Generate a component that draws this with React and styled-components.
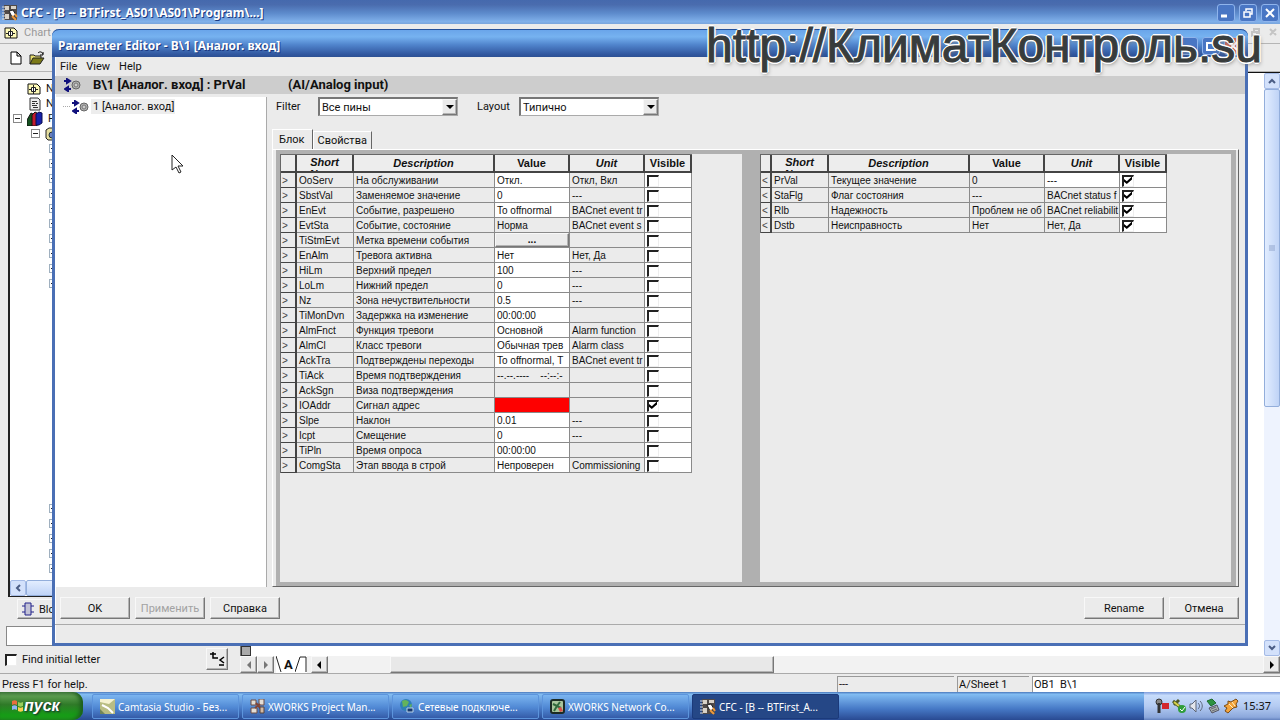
import React from 'react';
import styled, { createGlobalStyle, css } from 'styled-components';

const inputPins = [
  { name: 'OoServ', text: 'На обслуживании', value: 'Откл.', unit: 'Откл, Вкл' },
  { name: 'SbstVal', text: 'Заменяемое значение', value: '0', unit: '---' },
  { name: 'EnEvt', text: 'Событие, разрешено', value: 'To offnormal', unit: 'BACnet event tr' },
  { name: 'EvtSta', text: 'Событие, состояние', value: 'Норма', unit: 'BACnet event s', kind: 'locked' },
  { name: 'TiStmEvt', text: 'Метка времени события', value: '...', unit: '', kind: 'button' },
  { name: 'EnAlm', text: 'Тревога активна', value: 'Нет', unit: 'Нет, Да' },
  { name: 'HiLm', text: 'Верхний предел', value: '100', unit: '---' },
  { name: 'LoLm', text: 'Нижний предел', value: '0', unit: '---' },
  { name: 'Nz', text: 'Зона нечуствительности', value: '0.5', unit: '---' },
  { name: 'TiMonDvn', text: 'Задержка на изменение', value: '00:00:00', unit: '' },
  { name: 'AlmFnct', text: 'Функция тревоги', value: 'Основной', unit: 'Alarm function' },
  { name: 'AlmCl', text: 'Класс тревоги', value: 'Обычная трев', unit: 'Alarm class' },
  { name: 'AckTra', text: 'Подтверждены переходы', value: 'To offnormal, T', unit: 'BACnet event tr' },
  { name: 'TiAck', text: 'Время подтверждения', value: '--.--.----    --:--:-', unit: '', kind: 'locked' },
  { name: 'AckSgn', text: 'Виза подтверждения', value: '', unit: '', kind: 'locked' },
  { name: 'IOAddr', text: 'Сигнал адрес', value: '', unit: '', kind: 'error', visible: true },
  { name: 'Slpe', text: 'Наклон', value: '0.01', unit: '---' },
  { name: 'Icpt', text: 'Смещение', value: '0', unit: '---' },
  { name: 'TiPln', text: 'Время опроса', value: '00:00:00', unit: '' },
  { name: 'ComgSta', text: 'Этап ввода в строй', value: 'Непроверен', unit: 'Commissioning' },
];

const outputPins = [
  { name: 'PrVal', text: 'Текущее значение', value: '0', unit: '---', kind: 'locked', visible: true, openUnit: true },
  { name: 'StaFlg', text: 'Флаг состояния', value: '---', unit: 'BACnet status f', kind: 'locked', visible: true },
  { name: 'Rlb', text: 'Надежность', value: 'Проблем не об', unit: 'BACnet reliabilit', kind: 'locked', visible: true },
  { name: 'Dstb', text: 'Неисправность', value: 'Нет', unit: 'Нет, Да', kind: 'locked', visible: true },
];

const tasks = [
  { title: 'Camtasia Studio - Без...', icon: 'camtasia' },
  { title: 'XWORKS Project Man...', icon: 'project' },
  { title: 'Сетевые подключе...', icon: 'globe' },
  { title: 'XWORKS Network Co...', icon: 'network' },
  { title: 'CFC - [B -- BTFirst_A...', icon: 'cfc', active: true },
];

// true = the row has an expander, false = it only continues the branch
const branchRows = [...Array(10).fill(true), ...Array(14).fill(false), ...Array(5).fill(true)];

const PinIcon = () => (
  <svg width="17" height="14" viewBox="0 0 17 14" aria-hidden="true">
    <path d="M0 3h3M3 1l3 2-3 2zM7 11H4M4 9l-3 2 3 2z" fill="#10107c" stroke="#10107c" strokeWidth="2" />
    <circle cx="12" cy="7" r="4" fill="#b4b4b4" stroke="#666" />
    <circle cx="12" cy="7" r="2" fill="#ccc" stroke="#777" />
  </svg>
);

const ChartIcon = () => (
  <svg width="14" height="12" viewBox="0 0 14 12" aria-hidden="true">
    <path d="M1 1h9l3 3v7H1z" fill="#fffbb8" stroke="#111" />
    <path d="M2 6.500h2m5 0h2M4.500 4.500h4v4h-4zM6.500 2v9" fill="#fff" stroke="#222" />
  </svg>
);

const TextIcon = () => (
  <svg width="12" height="14" viewBox="0 0 12 14" aria-hidden="true">
    <path d="M1 1h8l2 2v10H1z" fill="#eee" stroke="#333" />
    <path d="M3 4.500h5M3 6.500h3m1 0h2M3 8.500h5M4 10.500h5" stroke="#333" />
  </svg>
);

const BooksIcon = () => (
  <svg width="16" height="15" viewBox="0 0 16 15" aria-hidden="true">
    <path d="M0 15V9l4-7 2 1v12z" fill="#14501f" stroke="#111" />
    <path d="M5 15V4l3-3 2 1v13z" fill="#c21c2c" stroke="#111" />
    <path d="M9 14V3l3-2 3 1v10l-3 2z" fill="#1721a8" stroke="#0b0f50" />
  </svg>
);

const FolderIcon = () => (
  <svg width="14" height="14" viewBox="0 0 14 14" aria-hidden="true">
    <path d="M1 3l3-2h8v12H3l-2-2z" fill="#e6dfa0" stroke="#222" />
    <circle cx="7" cy="8" r="3" fill="#6a7dbb" stroke="#233" />
  </svg>
);

const CfcIcon = () => (
  <svg width="16" height="16" viewBox="0 0 16 16" aria-hidden="true">
    <path d="M2 0h13v15H2z" fill="#504a48" />
    <path d="M3 1h4v4H3zM9 1h5v3H9zM3 9h4v5H3z" fill="#d8d2c8" />
    <path d="M0 2h3M0 5h3M0 8h3M0 11h3M0 14h3" stroke="#ddd" />
    <path d="M7 6l4-1 3 5-4 2z" fill="#fff" stroke="#222" />
    <path d="M10 11l4 4M13 9l2 3" stroke="#ee9a3c" strokeWidth="2" />
  </svg>
);

const taskIcons = {
  camtasia: (
    <svg width="15" height="15" viewBox="0 0 15 15" aria-hidden="true">
      <path d="M0 0h15v15H0z" fill="#b9bd83" />
      <path d="M0 0h15L9 5 0 3z" fill="#f5f2d0" />
      <path d="M2 6l6 3 5 5" fill="none" stroke="#fff" strokeWidth="2" />
      <path d="M0 10l5 5H0z" fill="#71855a" />
    </svg>
  ),
  project: (
    <svg width="15" height="15" viewBox="0 0 15 15" aria-hidden="true">
      <path d="M1 1h5v5H1zM9 0h5v6H9zM1 9h6v5H1z" fill="#e3ded6" stroke="#6c4c44" />
      <path d="M6 4l5 6M5 9l5-4" stroke="#804538" strokeWidth="2" />
      <path d="M10 8h4v6h-4z" fill="#d2baa4" stroke="#57423c" />
    </svg>
  ),
  globe: (
    <svg width="15" height="15" viewBox="0 0 15 15" aria-hidden="true">
      <circle cx="6" cy="6" r="6" fill="#2f7fb5" />
      <path d="M2 2c3-2 5-1 7 1L7 7 3 8zM9 6l3-1-1 4z" fill="#63b35c" />
      <path d="M7 9h6v4H7z" fill="#18386e" stroke="#b9d3e8" />
    </svg>
  ),
  network: (
    <svg width="15" height="15" viewBox="0 0 15 15" aria-hidden="true">
      <rect x="1" y="1" width="13" height="13" rx="2" fill="#a9c59c" stroke="#1c2b24" strokeWidth="2" />
      <path d="M3 5l4 2 3-4M4 12l3-5 4 2" fill="none" stroke="#31683c" strokeWidth="2" />
      <path d="M8 9l3-1 2 4-3 1z" fill="#d84f48" />
    </svg>
  ),
  cfc: <CfcIcon />,
};

const Triangle = ({ dir = 'down', color = '#000' }) => {
  const shapes = { down: 'M0 2h8L4 6z', left: 'M6 0v8L2 4z', right: 'M2 0v8l4-4z' };
  return (
    <svg width="8" height="8" viewBox="0 0 8 8" aria-hidden="true">
      <path d={shapes[dir]} fill={color} />
    </svg>
  );
};

const Chevron = ({ dir }) => {
  const shapes = { up: 'M1 6l3-3 3 3', down: 'M1 2l3 3 3-3', left: 'M6 1L3 4l3 3' };
  return (
    <svg width="8" height="8" viewBox="0 0 8 8" aria-hidden="true">
      <path d={shapes[dir]} fill="none" stroke="#4a5c84" strokeWidth="2" />
    </svg>
  );
};

const PinTable = ({ pins, mark, label }) => (
  <Table aria-label={label}>
    <colgroup>
      <MarkCol $narrow={mark === '<'} />
      <Col $w={57} />
      <Col $w={141} />
      <Col $w={75} />
      <Col $w={75} />
      <Col $w={47} />
    </colgroup>
    <thead>
      <tr>
        <HeadCell />
        <HeadCell $italic><HeadText $top>Short Name</HeadText></HeadCell>
        <HeadCell $italic><HeadText>Description</HeadText></HeadCell>
        <HeadCell><HeadText>Value</HeadText></HeadCell>
        <HeadCell $italic><HeadText>Unit</HeadText></HeadCell>
        <HeadCell><HeadText>Visible</HeadText></HeadCell>
      </tr>
    </thead>
    <tbody>
      {pins.map(pin => (
        <tr key={pin.name}>
          <MarkCell>{mark}</MarkCell>
          <Cell>{pin.name}</Cell>
          <Cell>{pin.text}</Cell>
          {pin.kind === 'button' ? (
            <ButtonCell><CellButton type="button">{pin.value}</CellButton></ButtonCell>
          ) : (
            <Cell $fill={pin.kind === 'error' ? '#fe0000' : !pin.kind && '#fff'}>{pin.value}</Cell>
          )}
          <Cell $fill={pin.openUnit && '#fff'}>{pin.unit}</Cell>
          <Cell $fill="#fff">
            <Check type="checkbox" aria-label={`${pin.name} visible`} defaultChecked={pin.visible} />
          </Cell>
        </tr>
      ))}
    </tbody>
  </Table>
);

const Combo = ({ id, label, value }) => (
  <Field>
    <label htmlFor={id}>{label}</label>
    <SelectBox>
      <Select id={id} defaultValue={value}>
        <option>{value}</option>
      </Select>
      <SelectArrow><Triangle /></SelectArrow>
    </SelectBox>
  </Field>
);

const ParameterEditor = () => (
  <Dialog role="dialog" aria-label="Parameter Editor">
    <DialogTitle>
      <span>Parameter Editor - B\1 [Аналог. вход]</span>
      <TitleButtons>
        <TitleButton type="button" aria-label="Minimize" />
        <TitleButton type="button" aria-label="Maximize">
          <svg width="10" height="10" viewBox="0 0 10 10"><path d="M1 2h8v7H1z" fill="none" stroke="#fff" strokeWidth="2" /></svg>
        </TitleButton>
        <TitleButton type="button" aria-label="Close" $close>
          <svg width="10" height="10" viewBox="0 0 10 10"><path d="M1 1l8 8M9 1L1 9" stroke="#fff" strokeWidth="2" /></svg>
        </TitleButton>
      </TitleButtons>
    </DialogTitle>
    <DialogMenu>
      <MenuItem type="button">File</MenuItem>
      <MenuItem type="button">View</MenuItem>
      <MenuItem type="button">Help</MenuItem>
    </DialogMenu>
    <BlockHeader>
      <PinIcon />
      <BlockName>B\1 [Аналог. вход] : PrVal</BlockName>
      <span>(AI/Analog input)</span>
    </BlockHeader>
    <DialogBody>
      <BlockTree>
        <TreeLeaf>
          <Dots />
          <PinIcon />
          <LeafName>1 [Аналог. вход]</LeafName>
        </TreeLeaf>
      </BlockTree>
      <Editor>
        <Filters>
          <Combo id="filter" label="Filter" value="Все пины" />
          <Combo id="layout" label="Layout" value="Типично" />
        </Filters>
        <Tabs role="tablist">
          <Tab type="button" role="tab" aria-selected="true" $active>Блок</Tab>
          <Tab type="button" role="tab" aria-selected="false">Свойства</Tab>
        </Tabs>
        <TabPanel role="tabpanel">
          <Frame>
            <Pane $fixed><PinTable pins={inputPins} mark=">" label="Inputs" /></Pane>
            <Splitter />
            <Pane><PinTable pins={outputPins} mark="<" label="Outputs" /></Pane>
          </Frame>
        </TabPanel>
      </Editor>
    </DialogBody>
    <Actions>
      <ActionButton type="button">OK</ActionButton>
      <ActionButton type="button" disabled>Применить</ActionButton>
      <ActionButton type="button">Справка</ActionButton>
      <Spacer />
      <ActionButton type="button" $wide>Rename</ActionButton>
      <ActionButton type="button">Отмена</ActionButton>
    </Actions>
    <DialogStatus />
  </Dialog>
);

const Catalog = () => (
  <Side>
    <TreeBox>
      <TreeRows>
        <TreeRow $indent={17}><ChartIcon /><span>New Chart</span></TreeRow>
        <TreeRow $indent={19}><TextIcon /><span>New Text</span></TreeRow>
        <TreeRow $indent={3}><Expander /><BooksIcon /><span>Program</span></TreeRow>
        <TreeRow $indent={21}><Expander /><FolderIcon /></TreeRow>
        {branchRows.map((open, i) => (
          <TreeRow key={i} $indent={39}>{open && <Expander $faded />}</TreeRow>
        ))}
      </TreeRows>
      <TreeScroll>
        <ScrollButton type="button" aria-label="Scroll left"><Chevron dir="left" /></ScrollButton>
        <ScrollThumb />
      </TreeScroll>
    </TreeBox>
    <BlocksTab type="button">
      <svg width="12" height="14" viewBox="0 0 12 14" aria-hidden="true">
        <path d="M0 4h12M0 10h12" stroke="#22228a" />
        <path d="M3 1h6v12H3z" fill="#c2c2d6" stroke="#22228a" />
      </svg>
      <span>Blocks</span>
    </BlocksTab>
    <SearchInput aria-label="Search block" />
    <FindRow>
      <FindLabel>
        <Check type="checkbox" />
        Find initial letter
      </FindLabel>
      <FindButton type="button" aria-label="Show connection">
        <svg width="16" height="14" viewBox="0 0 16 14">
          <path d="M1 2h6M4 0v6h5M15 5l-4 3 4 3M10 13h5" fill="none" stroke="#000" strokeWidth="1.500" />
        </svg>
      </FindButton>
    </FindRow>
  </Side>
);

const App = () => (
  <>
    <GlobalStyle />
    <Screen>
      <MainTitle>
        <CfcIcon />
        <span>CFC - [B -- BTFirst_AS01\AS01\Program\...]</span>
        <TitleButtons>
          <TitleButton type="button" aria-label="Minimize">
            <svg width="10" height="10" viewBox="0 0 10 10"><path d="M0 8h6" stroke="#fff" strokeWidth="3" /></svg>
          </TitleButton>
          <TitleButton type="button" aria-label="Restore">
            <svg width="10" height="10" viewBox="0 0 10 10"><path d="M3 3V1h6v5H7M1 4h6v5H1z" fill="none" stroke="#fff" strokeWidth="1.5" /></svg>
          </TitleButton>
          <TitleButton type="button" aria-label="Close">
            <svg width="10" height="10" viewBox="0 0 10 10"><path d="M1 1l8 8M9 1L1 9" stroke="#fff" strokeWidth="2" /></svg>
          </TitleButton>
        </TitleButtons>
      </MainTitle>
      <MainMenu>
        <ChartIcon />
        <MenuItem type="button" $muted>Chart</MenuItem>
        <ChildButtons>
          <svg width="30" height="10" viewBox="0 0 30 10" aria-hidden="true">
            <path d="M4 3V1h5v4H7M2 4h5v4H2zM20 1l6 6M26 1l-6 6" fill="none" stroke="#c4c4c4" strokeWidth="2" />
          </svg>
        </ChildButtons>
      </MainMenu>
      <Toolbar>
        <ToolButton type="button" aria-label="New">
          <svg width="12" height="14" viewBox="0 0 12 14"><path d="M1 1h6l4 4v8H1zM7 1v4h4" fill="#fff" stroke="#000" /></svg>
        </ToolButton>
        <ToolButton type="button" aria-label="Open">
          <svg width="16" height="14" viewBox="0 0 16 14">
            <path d="M1 13V4h4l1 1h6v3" fill="#e8df70" stroke="#222" />
            <path d="M1 13l3-6h11l-4 6z" fill="#7c7a18" stroke="#222" />
            <path d="M9 2c2-2 4-1 5 1m0-2v3h-3" fill="none" stroke="#000" />
          </svg>
        </ToolButton>
      </Toolbar>
      <Workspace>
        <Catalog />
        <ChartArea>
          <Canvas>
            <SplitHandle />
            <VScroll>
              <ScrollButton type="button" aria-label="Scroll up"><Chevron dir="up" /></ScrollButton>
              <ScrollThumb $vertical>
                <svg width="6" height="7" viewBox="0 0 6 7" aria-hidden="true"><path d="M0 1h6M0 3h6M0 5h6" stroke="#90a4cc" /></svg>
              </ScrollThumb>
              <ScrollButton type="button" aria-label="Scroll down"><Chevron dir="down" /></ScrollButton>
            </VScroll>
          </Canvas>
          <SheetBar>
            <FlatButton type="button" aria-label="Previous sheet"><Triangle dir="left" color="#777" /></FlatButton>
            <FlatButton type="button" aria-label="Next sheet"><Triangle dir="right" color="#777" /></FlatButton>
            <SheetTab type="button">
              <svg width="6" height="17" viewBox="0 0 6 17" aria-hidden="true"><path d="M0 0l5 16" stroke="#222" /></svg>
              A
              <svg width="12" height="17" viewBox="0 0 12 17" aria-hidden="true"><path d="M0 16L5 1h6v15" fill="none" stroke="#222" /></svg>
            </SheetTab>
            <FlatButton type="button" aria-label="Scroll left"><Triangle dir="left" /></FlatButton>
            <HTrack><HThumb /></HTrack>
            <FlatButton type="button" aria-label="Scroll right"><Triangle dir="right" /></FlatButton>
          </SheetBar>
        </ChartArea>
      </Workspace>
      <StatusBar>
        <StatusText>Press F1 for help.</StatusText>
        <StatusCell $w={117}>---</StatusCell>
        <StatusCell $w={72}>A/Sheet 1</StatusCell>
        <StatusCell $w={248} $light>OB1&nbsp; B\1</StatusCell>
      </StatusBar>
      <Taskbar>
        <StartButton type="button">
          <svg width="13" height="14" viewBox="0 0 13 14" aria-hidden="true">
            <path d="M1 2c2-1 3-1 5 0v4c-2-1-3-1-5 0z" fill="#ea6d3d" />
            <path d="M7 3c2 1 3 1 5 0v4c-2 1-3 1-5 0z" fill="#9ad05b" />
            <path d="M1 7c2-1 3-1 5 0v4c-2-1-3-1-5 0z" fill="#8fb4f3" />
            <path d="M7 8c2 1 3 1 5 0v4c-2 1-3 1-5 0z" fill="#f8d04c" />
          </svg>
          <span>пуск</span>
        </StartButton>
        <TaskList>
          {tasks.map(task => (
            <Task key={task.title} type="button" $active={task.active}>
              {taskIcons[task.icon]}
              <span>{task.title}</span>
            </Task>
          ))}
        </TaskList>
        <Tray>
          <svg width="14" height="16" viewBox="0 0 14 16" aria-hidden="true">
            <circle cx="4" cy="4" r="3" fill="#888" stroke="#333" />
            <path d="M4 5v10" stroke="#333" strokeWidth="3" />
            <path d="M7 5h7v6H7z" fill="#d3282d" />
          </svg>
          <svg width="14" height="16" viewBox="0 0 14 16" aria-hidden="true">
            <path d="M1 3l8 7M2 7l5-5" stroke="#4e5a28" strokeWidth="3" />
            <path d="M2 4l5 4" stroke="#d6d24b" strokeWidth="2" />
            <circle cx="10" cy="11" r="4" fill="#2f9d3b" />
            <path d="M8 11l2 2 3-4" fill="none" stroke="#fff" />
          </svg>
          <svg width="14" height="16" viewBox="0 0 14 16" aria-hidden="true">
            <path d="M1 6h2l4-4v12l-4-4H1z" fill="#e4e6ec" stroke="#5d6678" />
            <path d="M9 5c2 2 2 4 0 6M11 3c3 3 3 7 0 10" fill="none" stroke="#5d6678" />
          </svg>
          <svg width="14" height="16" viewBox="0 0 14 16" aria-hidden="true">
            <path d="M1 3l5-2 4 4-5 3z" fill="#2d9340" stroke="#1d6b2c" />
            <path d="M3 10l8-3 2 5-7 3z" fill="#a9b2ac" stroke="#556" />
            <path d="M5 11l5-2M6 13l5-2" stroke="#667" />
          </svg>
          <svg width="16" height="16" viewBox="0 0 16 16" aria-hidden="true">
            <path d="M5 3l3 1 5-3 2 2-2 3 1 3-4 1-5 5-3-2 2-3-3-2 4-2z" fill="#f3a43c" stroke="#7b4c17" />
            <path d="M6 6l4 4M9 4l3 4" stroke="#fff2cc" />
          </svg>
          <Clock>15:37</Clock>
        </Tray>
      </Taskbar>
      <ParameterEditor />
      <Watermark>http://КлиматКонтроль.su</Watermark>
      <Cursor width="13" height="20" viewBox="0 0 13 20" aria-hidden="true">
        <path d="M1 1v15l4-3 3 6 2-1-3-6h5z" fill="#fff" stroke="#222" />
      </Cursor>
    </Screen>
  </>
);

export default App;

const GlobalStyle = createGlobalStyle`
  *, *::before, *::after {
    box-sizing: border-box;
  }
  body {
    margin: 0;
    background: #ebebeb;
    color: #111;
    font: 11px/13px Roboto, Arial, sans-serif;
  }
  button, input, select {
    margin: 0;
    padding: 0;
    border: 0;
    border-radius: 0;
    color: inherit;
    font: inherit;
  }
  svg {
    display: block;
    flex: none;
  }
`;

const raised = css`
  border: 1px solid;
  border-color: #f8f8f8 #777 #777 #f8f8f8;
  box-shadow: inset -1px -1px #b4b4b4;
`;

const titleFont = css`
  color: #fff;
  font: bold 12px/16px "Noto Sans", sans-serif;
  text-shadow: 1px 1px #1c3a80;
  white-space: nowrap;
`;

const Screen = styled.div`
  position: relative;
  display: flex;
  flex-direction: column;
  min-height: 100vh;
  overflow: hidden;
`;

const MainTitle = styled.header`
  ${titleFont}
  display: flex;
  align-items: center;
  gap: 3px;
  height: 24px;
  padding: 2px 1px 0 2px;
  background: linear-gradient(#4569ad 0, #4a6cae 20%, #5d8bcc 55%, #80b0ea 90%, #78a4dc);
`;

const TitleButtons = styled.div`
  display: flex;
  gap: 4px;
  margin-left: auto;
`;

const TitleButton = styled.button`
  display: grid;
  place-items: center;
  width: 18px;
  height: 18px;
  border: 1px solid #8fb4ec;
  border-radius: 3px;
  background: ${({ $close }) => ($close ? '#c9665a' : '#4976c4')};
`;

const MainMenu = styled.nav`
  display: flex;
  align-items: center;
  gap: 6px;
  height: 20px;
  padding: 0 0 2px 4px;
  border-bottom: 1px solid #b5b5b5;
`;

const MenuItem = styled.button`
  background: none;
  color: ${({ $muted }) => ($muted ? '#999' : '#111')};
`;

const ChildButtons = styled.div`
  margin-left: auto;
`;

const Toolbar = styled.div`
  display: flex;
  align-items: center;
  gap: 7px;
  height: 28px;
  padding-left: 10px;
  border-bottom: 1px solid #b5b5b5;
`;

const ToolButton = styled.button`
  background: none;
`;

const Workspace = styled.main`
  display: flex;
  flex: 1;
  border-bottom: 1px solid #aaa;
`;

const Side = styled.aside`
  display: flex;
  flex-direction: column;
  width: 240px;
  padding: 7px 12px 3px 8px;
`;

const TreeBox = styled.div`
  display: flex;
  flex: 1;
  flex-direction: column;
  border: 1px solid #222;
  border-left-width: 2px;
  background: #fff;
`;

const TreeRows = styled.div`
  flex: 1;
  padding-top: 1px;
  overflow: hidden;
`;

const TreeRow = styled.div`
  display: flex;
  align-items: center;
  gap: 5px;
  height: 15px;
  padding-left: ${({ $indent }) => $indent}px;
`;

const Expander = styled.span`
  display: grid;
  place-items: center;
  flex: none;
  width: 9px;
  height: 9px;
  border: 1px solid ${({ $faded }) => ($faded ? '#9fb0bf' : '#888')};
  &::after {
    content: '';
    width: 5px;
    height: 1px;
    background: #222;
  }
`;

const TreeScroll = styled.div`
  display: flex;
  height: 16px;
`;

const ScrollButton = styled.button`
  display: grid;
  place-items: center;
  flex: none;
  width: 16px;
  height: 16px;
  border: 1px solid #a5bbe6;
  border-radius: 2px;
  background: #d3e1fb;
`;

const ScrollThumb = styled.div`
  display: grid;
  place-items: center;
  flex: ${({ $vertical }) => ($vertical ? '0 1 318px' : 1)};
  margin-bottom: ${({ $vertical }) => ($vertical ? 'auto' : 0)};
  border: 1px solid #93aedb;
  border-radius: 2px;
  background: ${({ $vertical }) => `linear-gradient(${$vertical ? '90deg' : '180deg'}, #e2edff, #bfd3f6)`};
`;

const BlocksTab = styled.button`
  ${raised}
  display: flex;
  align-items: center;
  align-self: flex-start;
  gap: 5px;
  height: 20px;
  margin: 2px 0 7px 9px;
  padding: 0 12px 0 4px;
  background: #ebebeb;
`;

const SearchInput = styled.input`
  height: 20px;
  margin-left: -2px;
  border: 1px solid #888;
  background: #fff;
`;

const FindRow = styled.div`
  display: flex;
  align-items: flex-end;
  justify-content: space-between;
  height: 24px;
  margin-left: -3px;
`;

const FindLabel = styled.label`
  display: flex;
  align-items: center;
  gap: 5px;
  height: 22px;
`;

const FindButton = styled.button`
  ${raised}
  width: 22px;
  height: 22px;
  padding: 0 2px;
  background: #ebebeb;
`;

const Check = styled.input`
  display: block;
  flex: none;
  width: 12px;
  height: 12px;
  margin-top: 1px;
  border: solid #eee;
  border-width: 2px 1px 1px 2px;
  border-top-color: #222;
  border-left-color: #222;
  background: #fff;
  appearance: none;
  &:checked::after {
    content: '';
    display: block;
    width: 8px;
    height: 8px;
    background: #000;
    clip-path: polygon(0 30%, 35% 58%, 100% 0, 100% 36%, 35% 95%, 0 65%);
  }
`;

const ChartArea = styled.section`
  display: flex;
  flex: 1;
  flex-direction: column;
`;

const Canvas = styled.div`
  display: flex;
  align-items: flex-end;
  flex: 1;
  border-top: 1px solid #111;
  border-left: 1px solid #777;
  background: #fff;
`;

const SplitHandle = styled.div`
  width: 10px;
  height: 10px;
  border: 1px solid #333;
  background: #aaa;
`;

const VScroll = styled.div`
  display: flex;
  flex-direction: column;
  align-self: stretch;
  width: 16px;
  margin-left: auto;
  background: #eef3fe;
`;

const SheetBar = styled.div`
  display: flex;
  height: 17px;
  background: #f2f2f2;
`;

const FlatButton = styled.button`
  ${raised}
  display: grid;
  place-items: center;
  flex: none;
  width: 17px;
  background: #ebebeb;
`;

const SheetTab = styled.button`
  display: flex;
  align-items: center;
  gap: 2px;
  margin: 0 4px 0 2px;
  background: #fff;
  font-size: 13px;
  font-weight: bold;
`;

const HTrack = styled.div`
  flex: 1;
  padding-left: 6%;
`;

const HThumb = styled.div`
  ${raised}
  width: 44%;
  height: 100%;
  background: #e8e8e8;
`;

const StatusBar = styled.footer`
  display: flex;
  gap: 3px;
  height: 18px;
  padding-top: 2px;
`;

const StatusText = styled.span`
  flex: 1;
  padding: 2px;
`;

const StatusCell = styled.span`
  width: ${({ $w }) => $w}px;
  padding: 1px;
  border: solid #999;
  border-width: 1px 0 0 1px;
  background: ${({ $light }) => ($light ? '#fff' : 'none')};
`;

const Taskbar = styled.div`
  display: flex;
  height: 28px;
  background: linear-gradient(#4a78bc 0, #82bdf2 8%, #6ea6e4 25%, #4679c6 60%, #294a92);
  color: #fff;
`;

const StartButton = styled.button`
  display: flex;
  align-items: center;
  width: 83px;
  padding-left: 11px;
  border-radius: 0 10px 10px 0;
  background: linear-gradient(#568a50 0, #5a9b4e 15%, #2f7a28 45%, #179a17 80%, #1ba51b);
  box-shadow: inset -3px 0 4px #1c5c1c;
  font: italic bold 16px/20px "Liberation Sans", sans-serif;
  text-shadow: 1px 1px 2px #123;
`;

const TaskList = styled.div`
  display: flex;
  gap: 3px;
  flex: 1;
  padding: 2px 0 1px 9px;
`;

const Task = styled.button`
  display: flex;
  align-items: center;
  gap: 3px;
  width: 147px;
  padding-left: 7px;
  border: 1px solid ${({ $active }) => ($active ? '#1b3a7b' : '#5c94dc')};
  border-radius: 2px;
  background: ${({ $active }) =>
    $active ? '#254786' : 'linear-gradient(#7bb5f0, #5088d4 55%, #345ba8)'};
  font: 10px/14px "Noto Sans", sans-serif;
  white-space: nowrap;
`;

const Tray = styled.div`
  display: flex;
  align-items: center;
  gap: 3px;
  width: 136px;
  padding-left: 11px;
  background: linear-gradient(#7e9cdc 0, #c7dcfb 12%, #b4cbf2 50%, #8ca8dc 90%, #6381be);
`;

const Clock = styled.time`
  margin-left: 1px;
  color: #111;
  font: 11px/14px "Noto Sans", sans-serif;
`;

const Dialog = styled.section`
  position: absolute;
  top: 29px;
  right: 32px;
  bottom: 74px;
  left: 52px;
  display: flex;
  flex-direction: column;
  border: solid #4a6fb5;
  border-width: 0 3px 3px;
  border-radius: 7px 7px 0 0;
  background: #ebebeb;
  box-shadow: inset 1px 0 #fff;
`;

const DialogTitle = styled.header`
  ${titleFont}
  display: flex;
  align-items: center;
  height: 28px;
  margin: 0 -3px;
  padding: 4px 6px 0;
  border-top: 1px solid #24509a;
  border-radius: 7px 7px 0 0;
  background: linear-gradient(#6aa5ea 0, #76b2f0 25%, #5084cc 55%, #31579f 90%, #2d5093);
`;

const DialogMenu = styled.nav`
  display: flex;
  gap: 9px;
  height: 19px;
  padding-left: 5px;
`;

const BlockHeader = styled.div`
  display: flex;
  align-items: center;
  height: 18px;
  padding-left: 9px;
  background: #cdcdcd;
  font-size: 13px;
  font-weight: bold;
  line-height: 16px;
`;

const BlockName = styled.span`
  width: 207px;
  padding-left: 12px;
`;

const DialogBody = styled.div`
  display: flex;
  flex: 1;
`;

const BlockTree = styled.div`
  width: 212px;
  margin: 3px 0 1px;
  padding-top: 1px;
  border-right: 1px solid #aaa;
  background: #fff;
`;

const TreeLeaf = styled.div`
  display: flex;
  align-items: center;
  gap: 2px;
  height: 17px;
  padding-left: 8px;
`;

const Dots = styled.span`
  width: 7px;
  border-top: 1px dotted #aaa;
`;

const LeafName = styled.span`
  padding: 1px 1px 1px 2px;
  background: #ededed;
`;

const Editor = styled.div`
  display: flex;
  flex: 1;
  flex-direction: column;
  padding: 3px 6px 1px 5px;
`;

const Filters = styled.div`
  display: flex;
  gap: 19px;
  height: 32px;
  padding-left: 4px;
`;

const Field = styled.div`
  display: grid;
  grid-template-columns: 42px 140px;
  height: 19px;
  align-items: center;
`;

const SelectBox = styled.div`
  position: relative;
  height: 19px;
`;

const Select = styled.select`
  width: 100%;
  height: 19px;
  padding-left: 2px;
  border: solid;
  border-width: 2px 1px 1px 2px;
  border-color: #777 #aaa #aaa #777;
  background: #fff;
  appearance: none;
`;

const SelectArrow = styled.span`
  ${raised}
  position: absolute;
  top: 2px;
  right: 1px;
  bottom: 1px;
  display: grid;
  place-items: center;
  width: 15px;
  background: #ebebeb;
  pointer-events: none;
`;

const Tabs = styled.div`
  display: flex;
  align-items: flex-end;
  height: 20px;
`;

const Tab = styled.button`
  height: ${({ $active }) => ($active ? 20 : 18)}px;
  padding: 0 ${({ $active }) => ($active ? '7px 1px 6px' : '4px 0 4px')};
  border: solid;
  border-width: 1px 1px 0 1px;
  border-color: #fff #666 #fff #fff;
  background: #ebebeb;
`;

const TabPanel = styled.div`
  display: flex;
  flex: 1;
  padding: 0 2px 0 3px;
  border: 1px solid;
  border-color: #fff #666 #666 #fff;
`;

const Frame = styled.div`
  display: flex;
  flex: 1;
  border: 4px solid #b0b0b0;
  border-right-width: 5px;
`;

const Pane = styled.div`
  flex: ${({ $fixed }) => ($fixed ? '0 0 462px' : 1)};
`;

const Splitter = styled.div`
  width: 18px;
  background: #b0b0b0;
`;

const Table = styled.table`
  width: min-content;
  border: solid #666;
  border-width: 1px 0 0 1px;
  border-spacing: 0;
  font-family: "Liberation Sans", Arial, sans-serif;
  table-layout: fixed;
  white-space: nowrap;
`;

const Col = styled.col`
  width: ${({ $w }) => $w}px;
`;

const MarkCol = styled.col`
  width: ${({ $narrow }) => ($narrow ? 11 : 16)}px;
`;

const HeadCell = styled.th`
  height: 18px;
  padding: 0;
  border: solid #444;
  border-width: 0 2px 2px 0;
  background: #ededed;
  font-style: ${({ $italic }) => ($italic ? 'italic' : 'normal')};
`;

const HeadText = styled.div`
  height: 16px;
  padding: ${({ $top }) => ($top ? '1px 10px 0' : '2px 0 0')};
  overflow: hidden;
  line-height: 12px;
  white-space: normal;
`;

const Cell = styled.td`
  height: 15px;
  max-width: 0;
  padding: 0 2px;
  border: solid #8a8a8a;
  border-width: 0 1px 1px 0;
  background: ${({ $fill }) => $fill || '#ebebeb'};
  font-size: 10px;
  overflow: hidden;
  white-space: pre;
`;

const MarkCell = styled(Cell)`
  padding: 0 1px;
  border-color: #444;
  border-right-width: 2px;
  color: #444;
`;

const ButtonCell = styled(Cell)`
  padding: 0;
`;

const CellButton = styled.button`
  ${raised}
  display: block;
  width: 100%;
  height: 14px;
  background: #ebebeb;
  font-weight: bold;
  line-height: 12px;
`;

const Actions = styled.div`
  display: flex;
  gap: 5px;
  height: 36px;
  padding: 9px 6px 4px 5px;
`;

const ActionButton = styled.button`
  ${raised}
  width: ${({ $wide }) => ($wide ? 80 : 70)}px;
  height: 22px;
  background: #ebebeb;
  &:disabled {
    color: #a2a2a2;
  }
`;

const Spacer = styled.span`
  flex: 1;
`;

const DialogStatus = styled.div`
  height: 19px;
  border-top: 1px solid #aaa;
`;

const Watermark = styled.div`
  position: absolute;
  top: 18px;
  right: 18px;
  color: #383c3c;
  font: 48px/56px "Liberation Sans", Arial, sans-serif;
  white-space: nowrap;
  pointer-events: none;
  text-shadow: 2px 0 #fff, -2px 0 #fff, 0 2px #fff, 0 -2px #fff,
    1px 1px #fff, -1px -1px #fff, 1px -1px #fff, -1px 1px #fff, 1px 2px 4px #777;
  -webkit-text-stroke: 1px #383c3c;
`;

const Cursor = styled.svg`
  position: absolute;
  top: 154px;
  left: 171px;
`;
